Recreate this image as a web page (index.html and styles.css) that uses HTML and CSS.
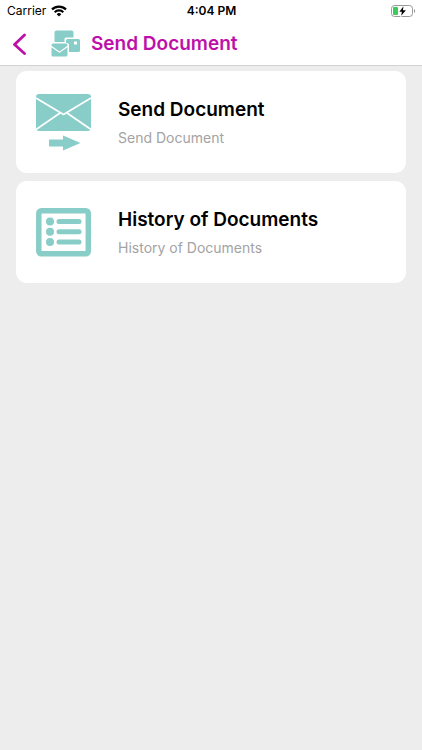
FILE: index.html
```html
<!DOCTYPE html>
<html lang="en">
<head>
<meta charset="utf-8">
<meta name="viewport" content="width=device-width, initial-scale=1">
<title>Send Document</title>
<link rel="stylesheet" href="styles.css">
</head>
<body>
<div class="status">
  <div class="carrier">
    <span>Carrier</span>
    <svg width="16" height="12" viewBox="0 0 16 12" aria-hidden="true">
      <g fill="none" stroke="#000" stroke-width="2.2">
        <path d="M1 4.4a10 10 0 0 1 14 0"/>
        <path d="M3.7 7.2a6.2 6.2 0 0 1 8.600 0"/>
      </g>
      <path d="M5.700 9.200a3.300 3.300 0 0 1 4.600 0L8 11.600z"/>
    </svg>
  </div>
  <time class="clock">4:04 PM</time>
  <svg class="battery" width="25" height="12" viewBox="0 0 25 12" aria-hidden="true">
    <rect x=".5" y=".5" width="21" height="11" rx="3" fill="#fff" stroke="#999"/>
    <path d="M23 4v4c1.600-.6 1.600-3.400 0-4" fill="#999"/>
    <rect x="2" y="2" width="5" height="8" rx="1" fill="#3ccb5a"/>
    <path d="M12.500 1.200 8.400 6.700h2.500L10.200 10.800l4.700-5.600h-3z" stroke="#fff" stroke-width="1.400" paint-order="stroke"/>
  </svg>
</div>
<header class="bar">
  <button class="back" type="button" aria-label="Back">
    <svg width="14" height="22" viewBox="0 0 14 22" aria-hidden="true">
      <path d="M12.500 2 2.500 11.500l10 9" fill="none" stroke="#bd10a8" stroke-width="2.800" stroke-linecap="round" stroke-linejoin="round"/>
    </svg>
  </button>
  <svg class="mail" width="30" height="28" viewBox="0 0 30 28" aria-hidden="true">
    <g fill="#88cdc8">
      <path d="M5.500 .5h15a2 2 0 0 1 2 2v5H15a1.500 1.500 0 0 0-1.500 1.500v3H3.500V2.500a2 2 0 0 1 2-2z"/>
      <path fill-rule="evenodd" d="M16.500 9H27.500a1.500 1.500 0 0 1 1.500 1.500v10a1.500 1.500 0 0 1-1.500 1.500H18v-7.500a2 2 0 0 0-2-1.500h-1v-2.500A1.500 1.500 0 0 1 16.500 9zM23 11.500V14.500h3V11.500z"/>
      <path d="M2 13.500h13a1.500 1.500 0 0 1 1.500 1.500v.8L8.500 21.400.5 15.800V15A1.500 1.500 0 0 1 2 13.500z"/>
      <path d="M.5 17.200 7.600 22.200q.9.6 1.800 0l7.100-5V25a1.500 1.500 0 0 1-1.500 1.500H2A1.500 1.500 0 0 1 .5 25z"/>
    </g>
  </svg>
  <h1 class="heading">Send Document</h1>
</header>
<main class="list">
  <a class="card" href="#send">
    <svg width="56" height="58" viewBox="0 0 56 58" aria-hidden="true">
      <rect x="0" y="1" width="55" height="37" rx="3" fill="#88cdc8"/>
      <path d="M0 5 27.500 21.500 55 5M0 36.500 24 20M55 36.500 31 20" fill="none" stroke="#fff" stroke-width="1.700"/>
      <path d="M13 46.500h14V42.500L44.500 50 27 57.500V53.500H13z" fill="#88cdc8"/>
    </svg>
    <div class="text">
      <h2 class="title">Send Document</h2>
      <p class="note">Send Document</p>
    </div>
  </a>
  <a class="card" href="#history">
    <svg width="56" height="58" viewBox="0 0 56 58" aria-hidden="true">
      <rect x="2.800" y="7.800" width="49.500" height="43" rx="2.500" fill="none" stroke="#88cdc8" stroke-width="5.500"/>
      <g fill="#88cdc8">
        <circle cx="14" cy="18.500" r="4"/><circle cx="14" cy="28.800" r="4"/><circle cx="14" cy="39" r="4"/>
        <rect x="20.500" y="16" width="25" height="5" rx="2.500"/>
        <rect x="20.500" y="26.300" width="25" height="5" rx="2.500"/>
        <rect x="20.500" y="36.500" width="25" height="5" rx="2.500"/>
      </g>
    </svg>
    <div class="text">
      <h2 class="title">History of Documents</h2>
      <p class="note">History of Documents</p>
    </div>
  </a>
</main>
</body>
</html>
```
FILE: styles.css
```css
* {
  box-sizing: border-box;
}

body {
  margin: 0;
  min-height: 100vh;
  background: #ededed;
  color: #000;
  font-family: Inter, "Liberation Sans", sans-serif;
}

h1,
h2,
p {
  margin: 0;
}

.status {
  display: grid;
  grid-template-columns: 1fr auto 1fr;
  align-items: center;
  height: 22px;
  padding: 0 6px 0 7px;
  background: #fff;
  font-size: 12px;
  line-height: 22px;
}

.carrier {
  display: flex;
  align-items: center;
  gap: 5px;
}

.clock {
  font-weight: 600;
}

.battery {
  justify-self: end;
}

.bar {
  display: flex;
  align-items: center;
  height: 44px;
  padding: 0 12px;
  border-bottom: 1px solid #d2d2d2;
  background: #fff;
}

.back {
  display: flex;
  margin: 0;
  padding: 0;
  border: 0;
  background: none;
}

.mail {
  margin: 0 10px 0 25px;
}

.heading {
  color: #bd10a8;
  font-size: 19px;
  font-weight: 600;
  line-height: 24px;
}

.list {
  display: flex;
  flex-direction: column;
  gap: 8px;
  padding: 5px 16px;
}

.card {
  display: flex;
  align-items: center;
  gap: 26px;
  padding: 20px;
  border-radius: 11px;
  background: #fff;
  color: inherit;
  text-decoration: none;
}

.text {
  padding: 5px 0 1px;
}

.title {
  font-size: 19px;
  font-weight: 600;
  line-height: 28px;
}

.note {
  color: #a3a3a3;
  font-size: 14px;
  line-height: 28px;
}
```
